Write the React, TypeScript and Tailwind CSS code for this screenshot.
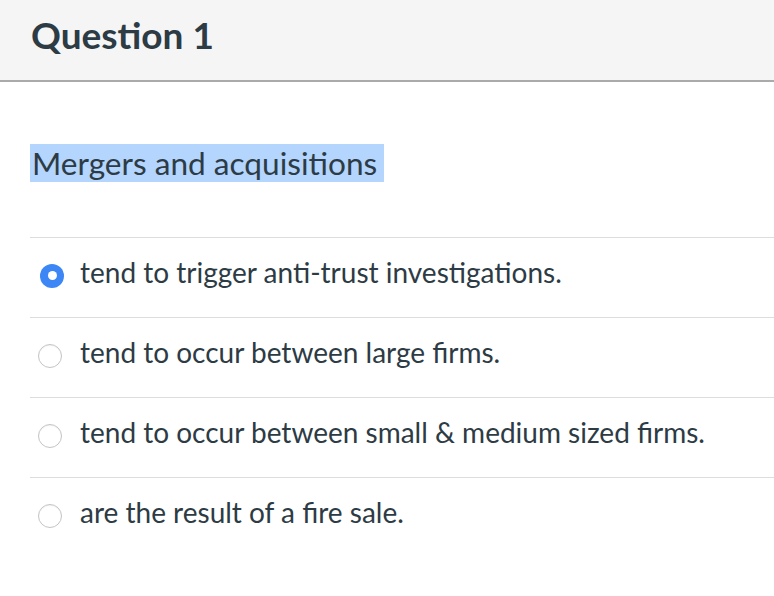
import React from "react";

const options = [
  { text: "tend to trigger anti-trust investigations.", selected: true },
  { text: "tend to occur between large firms.", selected: false },
  { text: "tend to occur between small & medium sized firms.", selected: false },
  { text: "are the result of a fire sale.", selected: false },
];

function Radio({ selected }: { selected: boolean }) {
  if (selected) {
    return (
      <span className="flex h-[24px] w-[24px] shrink-0 items-center justify-center rounded-full bg-[#3d86f5]">
        <span className="h-[9px] w-[9px] rounded-full bg-white" />
      </span>
    );
  }
  return (
    <span className="block h-[24px] w-[24px] shrink-0 rounded-full border border-[#c4c4c4] bg-white shadow-[inset_0_1px_1px_rgba(0,0,0,0.06)]" />
  );
}

export default function App() {
  return (
    <div
      className="h-[596px] w-[774px] overflow-hidden bg-white text-[#2d3b45]"
      style={{ fontFamily: "Lato, 'Noto Sans', sans-serif" }}
    >
      <div className="flex h-[82px] items-center border-b-2 border-[#aaaaaa] bg-[#f5f5f5] pl-[31px]">
        <h1 className="pb-[12px] text-[37px] font-bold leading-none">Question 1</h1>
      </div>
      <div className="pl-[30px] pt-[62px]">
        <span className="inline-block h-[38px] bg-[#b4d5fd] pl-[2px] pr-[7px] text-[31.6px] leading-[38px]">
          Mergers and acquisitions
        </span>
      </div>
      <div className="ml-[30px] mt-[55px]">
        {options.map((o, i) => (
          <div
            key={i}
            className="flex h-[80px] items-center border-t border-[#dddddd] pb-[11px]"
          >
            <div className={o.selected ? "ml-[10px] mt-[7px]" : "ml-[8px] mt-[7px]"}>
              <Radio selected={o.selected} />
            </div>
            <span className={(o.selected ? "ml-[16px]" : "ml-[18px]") + " text-[28px] leading-none"}>
              {o.text}
            </span>
          </div>
        ))}
      </div>
    </div>
  );
}
